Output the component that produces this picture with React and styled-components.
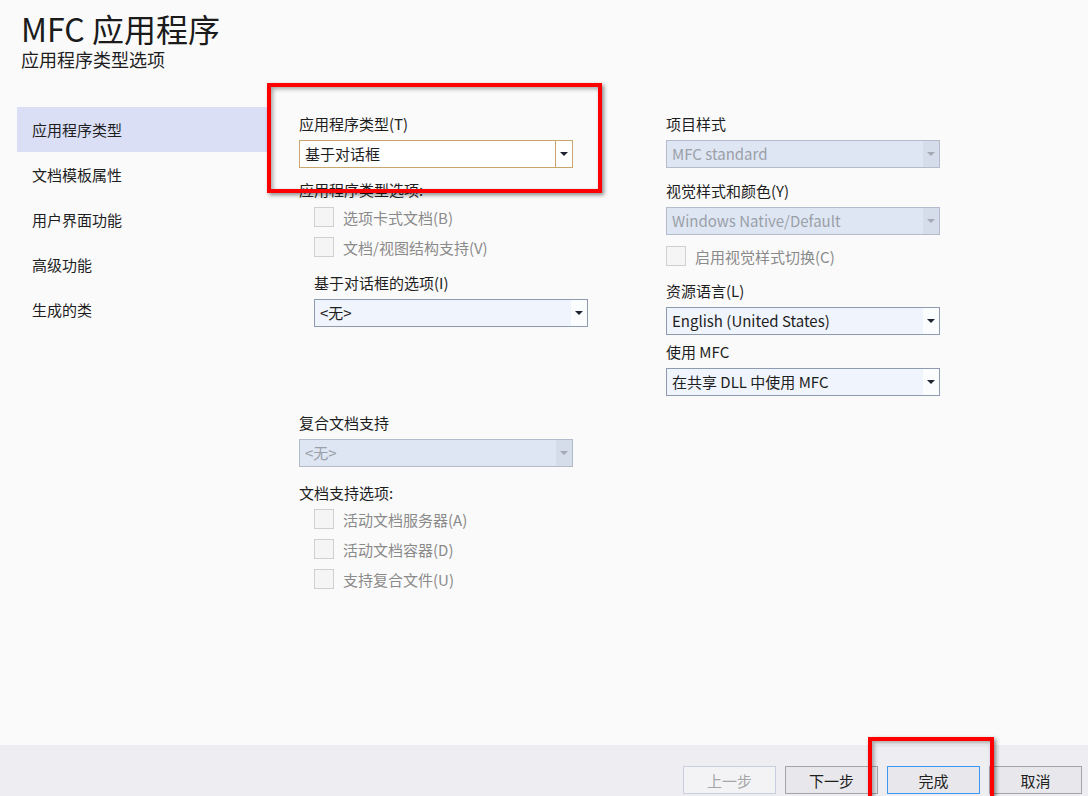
import React from "react";
import styled, { createGlobalStyle, css } from "styled-components";

const Global = createGlobalStyle`
  html, body { margin: 0; padding: 0; background: #fafafa; }
  body { font-family: "Noto Sans CJK SC", "Noto Sans", sans-serif; color: #1e1e1e; }
`;

const Page = styled.div`
  position: relative;
  width: 1088px;
  height: 796px;
  overflow: hidden;
  display: flex;
  flex-direction: column;
  background: #fafafa;
`;

const Header = styled.div`
  padding: 9px 0 0 21px;
`;

const Title = styled.h1`
  margin: 0;
  font-size: 32px;
  font-weight: 400;
  line-height: 38px;
  color: #1b1b1b;
`;

const Subtitle = styled.div`
  font-size: 18px;
  line-height: 22px;
  margin-top: 1px;
`;

const Body = styled.div`
  flex: 1;
  display: flex;
  padding-top: 37px;
`;

const Sidebar = styled.nav`
  width: 251px;
  margin-left: 17px;
  display: flex;
  flex-direction: column;
`;

const NavItem = styled.div`
  height: 45px;
  line-height: 45px;
  padding-left: 15px;
  font-size: 15px;
  background: ${(p) => (p.$active ? "#dadff6" : "transparent")};
`;

const Content = styled.div`
  display: flex;
  padding-left: 31px;
  padding-top: 7px;
  gap: 93px;
`;

const Column = styled.div`
  width: 274px;
  display: flex;
  flex-direction: column;
`;

const Label = styled.div`
  font-size: 15px;
  line-height: 20px;
  margin-top: ${(p) => p.$mt || 0}px;
  margin-left: ${(p) => (p.$indent ? 15 : 0)}px;
  margin-bottom: 6px;
`;

const SelectBox = styled.div`
  box-sizing: border-box;
  height: 28px;
  width: 274px;
  margin-left: ${(p) => (p.$indent ? 15 : 0)}px;
  display: flex;
  font-size: 15px;
  border: 1px solid #8e9ab0;
  background: #f0f4fc;
  color: #1e1e1e;
  ${(p) =>
    p.$focus &&
    css`
      border-color: #c9a66b;
      background: #ffffff;
    `}
  ${(p) =>
    p.$disabled &&
    css`
      border-color: #b4bccc;
      background: #dfe6f3;
      color: #9aa0a8;
    `}
`;

const SelectText = styled.div`
  flex: 1;
  padding-left: 5px;
  line-height: 26px;
  white-space: nowrap;
`;

const ArrowPart = styled.div`
  width: 16px;
  display: flex;
  align-items: center;
  justify-content: center;
  background: ${(p) => (p.$disabled ? "#d5dcea" : p.$focus ? "#fff" : "#fbfcfe")};
  border-left: ${(p) => (p.$focus ? "1px solid #c9a66b" : "none")};
  &::after {
    content: "";
    border-left: 4px solid transparent;
    border-right: 4px solid transparent;
    border-top: 4px solid ${(p) => (p.$disabled ? "#a4aab4" : "#1e2430")};
  }
`;

const Select = ({ value, focus, disabled, indent }) => (
  <SelectBox $focus={focus} $disabled={disabled} $indent={indent}>
    <SelectText>{value}</SelectText>
    <ArrowPart $focus={focus} $disabled={disabled} />
  </SelectBox>
);

const CheckRow = styled.div`
  height: 30px;
  display: flex;
  align-items: center;
  gap: 9px;
  margin-left: ${(p) => (p.$indent ? 15 : 0)}px;
  margin-top: ${(p) => p.$mt || 0}px;
  font-size: 15px;
  color: #8a8a8a;
`;

const Box = styled.span`
  box-sizing: border-box;
  width: 20px;
  height: 20px;
  border: 1px solid #cfcfcf;
  background: #f5f5f5;
`;

const Check = ({ label, indent, mt }) => (
  <CheckRow $indent={indent} $mt={mt}>
    <Box />
    {label}
  </CheckRow>
);

const Spacer = styled.div`
  height: ${(p) => p.$h}px;
`;

const Footer = styled.div`
  height: 51px;
  background: #eeeef2;
  display: flex;
  justify-content: flex-end;
  align-items: flex-start;
  gap: 9px;
  padding: 21px 6px 0 0;
  box-sizing: border-box;
`;

const Button = styled.button`
  width: 93px;
  height: 28px;
  box-sizing: border-box;
  font-family: inherit;
  font-size: 15px;
  border: 1px solid #a5a5a8;
  background: #e8e8ec;
  color: #1e1e1e;
  padding: 0;
  ${(p) =>
    p.$primary &&
    css`
      border-color: #3c98f0;
    `}
  ${(p) =>
    p.disabled &&
    css`
      border-color: #c9cde0;
      background: #f3f3f6;
      color: #a6a6a6;
    `}
`;

const Highlight = styled.div`
  position: absolute;
  box-sizing: border-box;
  border: 4px solid #ff0000;
  box-shadow: 2px 2px 4px rgba(0, 0, 0, 0.45), inset 2px 2px 4px rgba(0, 0, 0, 0.35);
  pointer-events: none;
`;

const navItems = ["应用程序类型", "文档模板属性", "用户界面功能", "高级功能", "生成的类"];

export default function App() {
  return (
    <Page>
      <Global />
      <Header>
        <Title>MFC 应用程序</Title>
        <Subtitle>应用程序类型选项</Subtitle>
      </Header>
      <Body>
        <Sidebar>
          {navItems.map((n, i) => (
            <NavItem key={n} $active={i === 0}>
              {n}
            </NavItem>
          ))}
        </Sidebar>
        <Content>
          <Column>
            <Label>应用程序类型(T)</Label>
            <Select value="基于对话框" focus />
            <Label $mt={12}>应用程序类型选项:</Label>
            <Check label="选项卡式文档(B)" indent mt={-4} />
            <Check label="文档/视图结构支持(V)" indent />
            <Label $mt={11} $indent>基于对话框的选项(I)</Label>
            <Select value="<无>" indent />
            <Spacer $h={86} />
            <Label>复合文档支持</Label>
            <Select value="<无>" disabled />
            <Label $mt={16}>文档支持选项:</Label>
            <Check label="活动文档服务器(A)" indent mt={-5} />
            <Check label="活动文档容器(D)" indent />
            <Check label="支持复合文件(U)" indent />
          </Column>
          <Column>
            <Label>项目样式</Label>
            <Select value="MFC standard" disabled />
            <Label $mt={13}>视觉样式和颜色(Y)</Label>
            <Select value="Windows Native/Default" disabled />
            <Check label="启用视觉样式切换(C)" mt={6} />
            <Label $mt={10}>资源语言(L)</Label>
            <Select value="English (United States)" />
            <Label $mt={7}>使用 MFC</Label>
            <Select value="在共享 DLL 中使用 MFC" />
          </Column>
        </Content>
      </Body>
      <Footer>
        <Button disabled>上一步</Button>
        <Button>下一步</Button>
        <Button $primary>完成</Button>
        <Button>取消</Button>
      </Footer>
      <Highlight style={{ left: 267, top: 83, width: 335, height: 110 }} />
      <Highlight style={{ left: 868, top: 737, width: 126, height: 70 }} />
    </Page>
  );
}
